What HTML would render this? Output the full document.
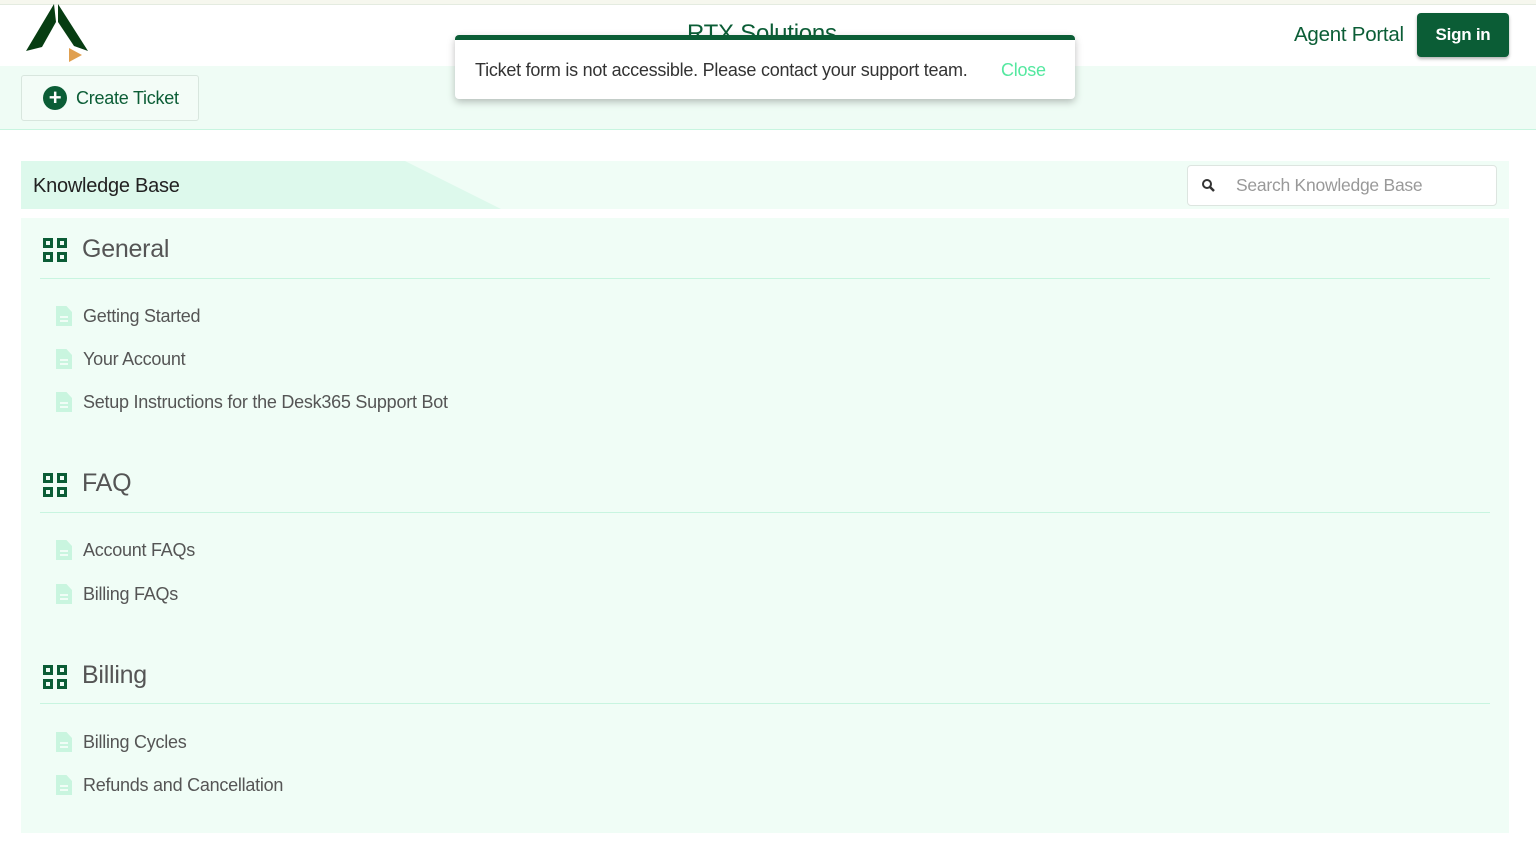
<!DOCTYPE html><html><head><style>
*{margin:0;padding:0;box-sizing:border-box}
body{width:1536px;height:858px;background:#fff;font-family:"Liberation Sans",sans-serif;position:relative;overflow:hidden;letter-spacing:-0.25px}
.a{position:absolute}
.t{font-size:18px;color:#555}
.h{font-size:25px;color:#555}
.doc{width:16px;height:20px;background:#c9f5df;position:absolute;clip-path:polygon(0 0,65% 0,100% 30%,100% 100%,0 100%)}
.doc:after{content:"";position:absolute;left:4px;top:10px;width:8px;height:2px;background:#f0fdf6;box-shadow:0 4px 0 #f0fdf6}
.grid{position:absolute;width:24px;height:24px}
.grid i{position:absolute;width:10px;height:10px;border:3px solid #0b5d36}
.line{position:absolute;left:40px;width:1450px;height:1px;background:#c8f5e0}
</style></head><body>
<div class="a" style="left:0;top:0;width:1536px;height:5px;background:#f6f7ee;border-bottom:1px solid #e4ebe0"></div>
<svg class="a" style="left:22px;top:4px" width="70" height="60"><polygon points="4,47 32,0 34,18 20,43" fill="#073d12"/><polygon points="36,0 66,47 52,42 36,18" fill="#073d12"/><polygon points="47,44 60,51 47,58" fill="#e0a050"/></svg>
<div class="a" style="left:687px;top:20px;font-size:24px;color:#0b5d36">RTX Solutions</div>
<div class="a" style="left:1294px;top:23px;font-size:20.5px;color:#0b5d36">Agent Portal</div>
<div class="a" style="left:1417px;top:13px;width:92px;height:44px;background:#0b5d36;border-radius:4px;color:#fff;font-weight:bold;font-size:17px;line-height:44px;text-align:center;box-shadow:0 2px 3px rgba(0,0,0,.3)">Sign in</div>
<div class="a" style="left:0;top:66px;width:1536px;height:64px;background:#effcf5;border-bottom:1px solid #c8f5e0"></div>
<div class="a" style="left:21px;top:75px;width:178px;height:46px;border:1px solid #d8e6de;border-radius:3px;background:#f3fcf7"></div>
<div class="a" style="left:43px;top:86px;width:24px;height:24px;border-radius:50%;background:#0b5d36;color:#fff;font-size:22px;font-weight:bold;line-height:23px;text-align:center">+</div>
<div class="a" style="left:76px;top:88px;font-size:18px;color:#0b5d36">Create Ticket</div>
<div class="a" style="left:455px;top:35px;width:620px;height:64px;background:#fff;border-top:5px solid #0b5d36;border-radius:4px;box-shadow:0 3px 8px rgba(0,0,0,.25)"></div>
<div class="a" style="left:475px;top:60px;font-size:18px;color:#333">Ticket form is not accessible. Please contact your support team.</div>
<div class="a" style="left:1001px;top:60px;font-size:18px;color:#55e8a0">Close</div>
<div class="a" style="left:21px;top:161px;width:1488px;height:48px;background:#f0fdf6"></div>
<div class="a" style="left:21px;top:161px;width:480px;height:48px;background:#ddf9ec;clip-path:polygon(0 0,80% 0,100% 100%,0 100%)"></div>
<div class="a" style="left:33px;top:175px;font-size:20px;color:#222">Knowledge Base</div>
<div class="a" style="left:1187px;top:165px;width:310px;height:41px;background:#fff;border:1px solid #dde5e0;border-radius:4px"></div>
<svg class="a" style="left:1201px;top:178px" width="16" height="16"><circle cx="6" cy="6" r="4" stroke="#333" stroke-width="2" fill="none"/><line x1="9" y1="9" x2="13" y2="13" stroke="#333" stroke-width="2.5"/></svg>
<div class="a" style="left:1236px;top:175px;font-size:17.5px;color:#999">Search Knowledge Base</div>
<div class="a" style="left:21px;top:218px;width:1488px;height:615px;background:#f0fdf6"></div>
<div class="grid" style="left:43px;top:238px"><i style="left:0;top:0"></i><i style="left:14px;top:0"></i><i style="left:0;top:14px"></i><i style="left:14px;top:14px"></i></div>
<div class="a h" style="left:82px;top:235px">General</div>
<div class="line" style="top:278px"></div>
<div class="doc" style="left:56px;top:306px"></div><div class="a t" style="left:83px;top:306px">Getting Started</div>
<div class="doc" style="left:56px;top:349px"></div><div class="a t" style="left:83px;top:349px">Your Account</div>
<div class="doc" style="left:56px;top:392px"></div><div class="a t" style="left:83px;top:392px">Setup Instructions for the Desk365 Support Bot</div>
<div class="grid" style="left:43px;top:473px"><i style="left:0;top:0"></i><i style="left:14px;top:0"></i><i style="left:0;top:14px"></i><i style="left:14px;top:14px"></i></div>
<div class="a h" style="left:82px;top:469px">FAQ</div>
<div class="line" style="top:512px"></div>
<div class="doc" style="left:56px;top:540px"></div><div class="a t" style="left:83px;top:540px">Account FAQs</div>
<div class="doc" style="left:56px;top:584px"></div><div class="a t" style="left:83px;top:584px">Billing FAQs</div>
<div class="grid" style="left:43px;top:665px"><i style="left:0;top:0"></i><i style="left:14px;top:0"></i><i style="left:0;top:14px"></i><i style="left:14px;top:14px"></i></div>
<div class="a h" style="left:82px;top:661px">Billing</div>
<div class="line" style="top:703px"></div>
<div class="doc" style="left:56px;top:732px"></div><div class="a t" style="left:83px;top:732px">Billing Cycles</div>
<div class="doc" style="left:56px;top:775px"></div><div class="a t" style="left:83px;top:775px">Refunds and Cancellation</div>
</body></html>
